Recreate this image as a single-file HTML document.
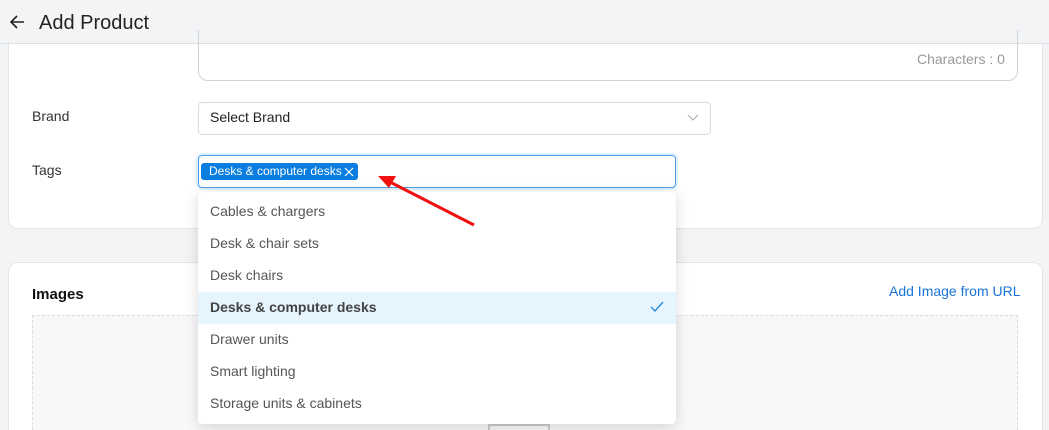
<!DOCTYPE html>
<html style="width:1049px;height:430px;overflow:hidden"><head><style>
*{box-sizing:border-box;margin:0;padding:0}
body{width:1049px;height:430px;overflow:hidden;background:#f3f4f6;font-family:"Liberation Sans",Roboto,sans-serif;position:relative;color:#333}
.hdr{position:absolute;left:0;top:0;width:1049px;height:44px;background:#f3f4f6;border-bottom:1px solid #dcdfe3}
.hdr .t{position:absolute;left:39px;top:12px;font-size:20px;color:#222}
.card1{position:absolute;left:8px;top:20px;width:1035px;height:209px;background:#fff;border:1px solid #e3e5e8;border-radius:10px}
.card2{position:absolute;left:8px;top:262px;width:1035px;height:168px;background:#fff;border:1px solid #e3e5e8;border-bottom:none;border-radius:10px 10px 0 0}
.abs{position:absolute}
.lbl{font-size:14px;color:#333}
</style></head><body>
<div class="card1"></div>
<div class="card2"></div>
<div class="hdr">
<svg class="abs" style="left:9px;top:14px" width="16" height="16" viewBox="0 0 16 16"><path d="M15 8H2M8 2L2 8l6 6" stroke="#222" stroke-width="1.6" fill="none"/></svg>
<div class="t">Add Product</div>
</div>
<div class="abs" style="left:198px;top:30px;width:820px;height:51px;border:1px solid #cfd2d6;border-top:none;border-radius:0 0 10px 10px"></div>
<div class="abs" style="left:917px;top:51px;font-size:14px;color:#999">Characters : 0</div>
<div class="abs lbl" style="left:32px;top:108px">Brand</div>
<div class="abs" style="left:198px;top:102px;width:513px;height:33px;border:1px solid #d9dbde;border-radius:4px"></div>
<div class="abs" style="left:210px;top:109px;font-size:14px;color:#222">Select Brand</div>
<svg class="abs" style="left:687px;top:114px" width="12" height="8" viewBox="0 0 12 8"><path d="M1 1l5 5 5-5" stroke="#aaa" fill="none"/></svg>
<div class="abs lbl" style="left:32px;top:162px">Tags</div>
<div class="abs" style="left:198px;top:155px;width:478px;height:33px;border:1px solid #4a9fe8;border-radius:4px;box-shadow:0 0 0 2px #e0effc"></div>
<div class="abs" style="left:201px;top:163px;width:157px;height:17px;background:#0a7ee0;border-radius:3px;color:#fff;font-size:12px;line-height:17px;padding-left:8px">Desks &amp; computer desks</div>
<svg class="abs" style="left:344px;top:167px" width="10" height="10" viewBox="0 0 10 10"><path d="M1 1l8 8M9 1l-8 8" stroke="#fff" stroke-width="1.2"/></svg>
<div class="abs lbl" style="left:32px;top:286px;font-size:15px;font-weight:bold;color:#111">Images</div>
<div class="abs" style="left:889px;top:283px;font-size:14px;color:#1a73d9">Add Image from URL</div>
<div class="abs" style="left:32px;top:315px;width:986px;height:115px;border:1px dashed #dcdcdc;border-bottom:none;background:#f8f8f9"></div>
<div class="abs" style="left:488px;top:424px;width:62px;height:6px;border:2px solid #ccc;border-bottom:none"></div>
<div class="abs" style="left:198px;top:192px;width:478px;height:232px;background:#fff;border-radius:4px;box-shadow:0 3px 14px rgba(0,0,0,.15);font-size:14px;color:#555">
<div style="height:32px;line-height:38px;padding-left:12px">Cables &amp; chargers</div>
<div style="height:32px;line-height:38px;padding-left:12px">Desk &amp; chair sets</div>
<div style="height:32px;line-height:38px;padding-left:12px">Desk chairs</div>
<div style="height:32px;line-height:30px;padding-left:12px;margin-top:4px;background:#e6f4fd;font-weight:bold;color:#444;position:relative">Desks &amp; computer desks<svg style="position:absolute;right:12px;top:9px" width="14" height="12" viewBox="0 0 14 12"><path d="M1 6l4 4 8-9" stroke="#2a8de0" stroke-width="1.4" fill="none"/></svg></div>
<div style="height:32px;line-height:30px;padding-left:12px">Drawer units</div>
<div style="height:32px;line-height:30px;padding-left:12px">Smart lighting</div>
<div style="height:32px;line-height:30px;padding-left:12px">Storage units &amp; cabinets</div>
</div>
<svg class="abs" style="left:370px;top:168px" width="110" height="64" viewBox="370 168 110 64"><path d="M474 225L388 181" stroke="#f01010" stroke-width="3"/><path d="M378 176L396 176L389 188Z" fill="#f01010"/></svg>
</body></html>
